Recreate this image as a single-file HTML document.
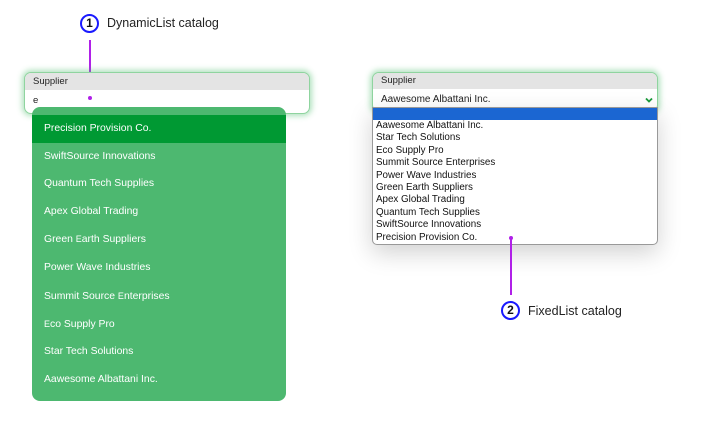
<!DOCTYPE html>
<html><head><meta charset="utf-8"><style>
*{margin:0;padding:0;box-sizing:border-box}
body{width:720px;height:429px;background:#fff;position:relative;overflow:hidden;font-family:"Liberation Sans",sans-serif}
.abs{position:absolute}
.circ{position:absolute;width:19px;height:19px;border:2px solid #1a1aff;border-radius:50%;font-size:12px;font-weight:bold;text-align:center;line-height:15px;color:#111}
.lbl{position:absolute;font-size:12.5px;color:#222}
.vl{position:absolute;width:2px;background:#b020e8}
.dot{position:absolute;width:4px;height:4px;border-radius:50%;background:#b020e8}
.box{position:absolute;border:1px solid #8fd49f;border-radius:7px;box-shadow:0 0 6px 2px rgba(80,190,110,.45);background:#fff;overflow:hidden}
.hd{background:#e4e4e4;font-size:9.5px;color:#222;padding-left:8px}
.dl{position:absolute;left:32px;top:107px;width:254px;height:294px;background:#4db870;border-radius:8px;overflow:hidden}
.dl div{position:absolute;left:0;width:254px;height:28px;line-height:28px;padding-left:12px;color:#fff;font-size:10.4px}
.dl small{font-size:9px}
.fl{position:absolute;left:372px;top:107px;width:286px;height:138px;background:#fff;border:1px solid #999;border-radius:0 0 5px 5px;box-shadow:0 8px 24px rgba(0,0,0,.18);overflow:hidden}
.fl div{height:12.4px;line-height:12.4px;font-size:9.8px;color:#111;padding-left:3px}
</style></head><body>
<div class="circ" style="left:80px;top:14px">1</div>
<div class="lbl" style="left:107px;top:16px">DynamicList catalog</div>
<div class="vl" style="left:89px;top:40px;height:58px"></div>

<div class="box" style="left:24px;top:72px;width:286px;height:42px">
 <div class="hd" style="height:17px;line-height:17px">Supplier</div>
 <div style="font-size:9.5px;padding-left:8px;line-height:22px;color:#222">e</div>
</div>
<div class="dot" style="left:88px;top:96px"></div>

<div class="dl">
 <div style="top:8px;background:#009933">Precision Provision Co.</div>
 <div style="top:36px">SwiftSource Innovations</div>
 <div style="top:63px">Quantum Tech Supplies</div>
 <div style="top:91px">Apex Global Trading</div>
 <div style="top:118px">Green <small>E</small>arth Suppliers</div>
 <div style="top:147px">Power Wave Industries</div>
 <div style="top:175px">Summit Source <small>E</small>nterprises</div>
 <div style="top:203px"><small>E</small>co Supply Pro</div>
 <div style="top:231px">Star Tech Solutions</div>
 <div style="top:259px">Aawesome Albattani Inc.</div>
</div>

<div class="box" style="left:372px;top:72px;width:286px;height:40px">
 <div class="hd" style="height:16px;line-height:16px">Supplier</div>
 <div style="font-size:10px;padding-left:8px;line-height:21px;color:#222">Aawesome Albattani Inc.</div>
 <svg class="abs" style="left:272px;top:24px" width="8" height="6" viewBox="0 0 8 6"><path d="M1 1.5L4 4.5L7 1.5" stroke="#1a9a3a" stroke-width="1.8" fill="none"/></svg>
</div>
<div class="fl">
 <div style="background:#1b66d2;height:12px"></div>
 <div>Aawesome Albattani Inc.</div>
 <div>Star Tech Solutions</div>
 <div>Eco Supply Pro</div>
 <div>Summit Source Enterprises</div>
 <div>Power Wave Industries</div>
 <div>Green Earth Suppliers</div>
 <div>Apex Global Trading</div>
 <div>Quantum Tech Supplies</div>
 <div>SwiftSource Innovations</div>
 <div>Precision Provision Co.</div>
</div>
<div class="dot" style="left:509px;top:236px"></div>
<div class="vl" style="left:510px;top:238px;height:57px"></div>
<div class="circ" style="left:501px;top:301px">2</div>
<div class="lbl" style="left:528px;top:304px">FixedList catalog</div>
</body></html>
